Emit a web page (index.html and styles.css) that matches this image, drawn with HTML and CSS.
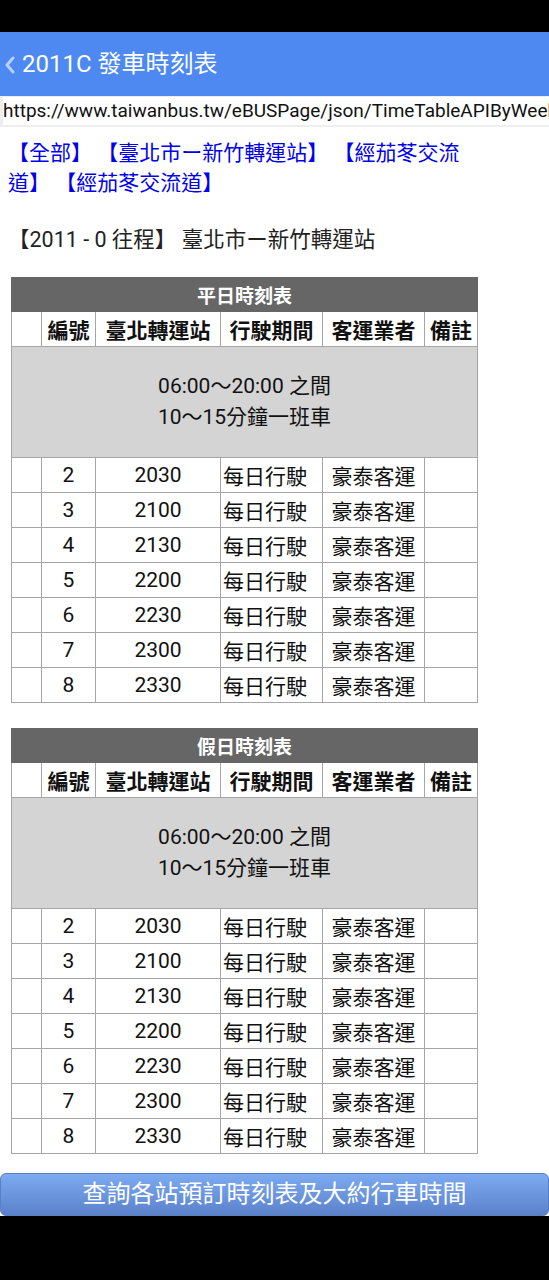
FILE: index.html
```html
<!DOCTYPE html>
<html lang="zh-Hant">
<head>
<meta charset="utf-8">
<title>2011C 發車時刻表</title>
<link rel="stylesheet" href="styles.css">
</head>
<body>
<div class="screen">
  <div class="statusbar"></div>
  <header class="appbar">
    <svg class="back" width="12" height="18" viewBox="0 0 12 18"><polyline points="9,2 3,9 9,16" fill="none" stroke="#ffffff" stroke-opacity="0.6" stroke-width="3" stroke-linecap="round" stroke-linejoin="round"/></svg>
    <span class="apptitle">2011C 發車時刻表</span>
  </header>
  <main class="content">
    <div class="urlbar"><div class="urlfield">https://www.taiwanbus.tw/eBUSPage/json/TimeTableAPIByWeek</div></div>
    <div class="links"><a href="#">【全部】</a> <a href="#">【臺北市ー新竹轉運站】</a> <a href="#">【經茄苳交流道】</a> <a href="#">【經茄苳交流道】</a></div>
    <div class="route">【2011 - 0 往程】 臺北市ー新竹轉運站</div>

    <table class="tt">
      <colgroup><col class="c1"><col class="c2"><col class="c3"><col class="c4"><col class="c5"><col class="c6"></colgroup>
      <tr class="ttl"><th colspan="6">平日時刻表</th></tr>
      <tr class="hdr"><th></th><th>編號</th><th>臺北轉運站</th><th>行駛期間</th><th>客運業者</th><th>備註</th></tr>
      <tr class="info"><td colspan="6">06:00～20:00 之間<br>10～15分鐘一班車</td></tr>
      <tr><td></td><td>2</td><td>2030</td><td class="l">每日行駛</td><td>豪泰客運</td><td></td></tr>
      <tr><td></td><td>3</td><td>2100</td><td class="l">每日行駛</td><td>豪泰客運</td><td></td></tr>
      <tr><td></td><td>4</td><td>2130</td><td class="l">每日行駛</td><td>豪泰客運</td><td></td></tr>
      <tr><td></td><td>5</td><td>2200</td><td class="l">每日行駛</td><td>豪泰客運</td><td></td></tr>
      <tr><td></td><td>6</td><td>2230</td><td class="l">每日行駛</td><td>豪泰客運</td><td></td></tr>
      <tr><td></td><td>7</td><td>2300</td><td class="l">每日行駛</td><td>豪泰客運</td><td></td></tr>
      <tr><td></td><td>8</td><td>2330</td><td class="l">每日行駛</td><td>豪泰客運</td><td></td></tr>
    </table>

    <table class="tt second">
      <colgroup><col class="c1"><col class="c2"><col class="c3"><col class="c4"><col class="c5"><col class="c6"></colgroup>
      <tr class="ttl"><th colspan="6">假日時刻表</th></tr>
      <tr class="hdr"><th></th><th>編號</th><th>臺北轉運站</th><th>行駛期間</th><th>客運業者</th><th>備註</th></tr>
      <tr class="info"><td colspan="6">06:00～20:00 之間<br>10～15分鐘一班車</td></tr>
      <tr><td></td><td>2</td><td>2030</td><td class="l">每日行駛</td><td>豪泰客運</td><td></td></tr>
      <tr><td></td><td>3</td><td>2100</td><td class="l">每日行駛</td><td>豪泰客運</td><td></td></tr>
      <tr><td></td><td>4</td><td>2130</td><td class="l">每日行駛</td><td>豪泰客運</td><td></td></tr>
      <tr><td></td><td>5</td><td>2200</td><td class="l">每日行駛</td><td>豪泰客運</td><td></td></tr>
      <tr><td></td><td>6</td><td>2230</td><td class="l">每日行駛</td><td>豪泰客運</td><td></td></tr>
      <tr><td></td><td>7</td><td>2300</td><td class="l">每日行駛</td><td>豪泰客運</td><td></td></tr>
      <tr><td></td><td>8</td><td>2330</td><td class="l">每日行駛</td><td>豪泰客運</td><td></td></tr>
    </table>

    <div class="btn">查詢各站預訂時刻表及大約行車時間</div>
  </main>
  <div class="navbar"></div>
</div>
</body>
</html>
```

FILE: styles.css
```css
html, body {
  margin: 0;
  padding: 0;
  background: #000;
}
body {
  font-family: Roboto, "Noto Sans CJK TC", sans-serif;
  color: #111;
}
.screen {
  width: 549px;
  height: 1280px;
  display: flex;
  flex-direction: column;
  overflow: hidden;
}
.statusbar {
  height: 32px;
  flex: none;
  background: #000;
}
.appbar {
  height: 64px;
  flex: none;
  background: #4e89f2;
  display: flex;
  align-items: center;
  padding-left: 4px;
  gap: 6px;
}
.back {
  flex: none;
  margin-top: 1px;
}
.apptitle {
  color: #fff;
  font-size: 24px;
  line-height: 1;
}
.content {
  flex: 1;
  background: #fff;
  display: flex;
  flex-direction: column;
  align-items: flex-start;
  overflow: hidden;
}
.urlbar {
  align-self: stretch;
  background: #eeeeee;
  padding: 1px 0 2px 3px;
}
.urlfield {
  background: #fff;
  height: 28px;
  line-height: 28px;
  font-size: 19px;
  white-space: nowrap;
  overflow: hidden;
  color: #111;
}
.links {
  width: 470px;
  padding: 11px 0 0 8px;
  font-size: 21px;
  line-height: 30px;
}
.links a {
  color: #0000ee;
  text-decoration: none;
}
.route {
  margin-top: 27px;
  padding-left: 8px;
  font-size: 21.5px;
  line-height: 30px;
  color: #222;
}
.tt {
  margin: 22px 0 0 11px;
  width: 466px;
  table-layout: fixed;
  border-collapse: collapse;
  border: 1px solid #9c9c9c;
  font-size: 21px;
}
.tt.second {
  margin-top: 25px;
}
.c1 { width: 30px; }
.c2 { width: 54px; }
.c3 { width: 125px; }
.c4 { width: 102px; }
.c5 { width: 102px; }
.c6 { width: 53px; }
.tt th, .tt td {
  border: 1px solid #a6a6a6;
  padding: 0;
  height: 34px;
  text-align: center;
  vertical-align: middle;
  white-space: nowrap;
  overflow: hidden;
}
.tt td.l {
  text-align: left;
  padding-left: 2px;
}
.tt .ttl th {
  background: #666666;
  color: #fff;
  font-size: 19px;
  height: 33px;
  border-color: #666666;
}
.tt .hdr th {
  background: #fff;
  color: #111;
  font-weight: bold;
}
.tt .info td {
  background: #d4d4d4;
  height: 110px;
  line-height: 31px;
  font-size: 21px;
}
.btn {
  align-self: stretch;
  margin-top: 19px;
  height: 41px;
  border: 1px solid #5a7fc3;
  border-radius: 6px;
  background: linear-gradient(#7daaf1, #5a82ca);
  color: #fff;
  font-size: 24px;
  line-height: 41px;
  text-align: center;
}
.navbar {
  height: 64px;
  flex: none;
  background: #000;
}
```
